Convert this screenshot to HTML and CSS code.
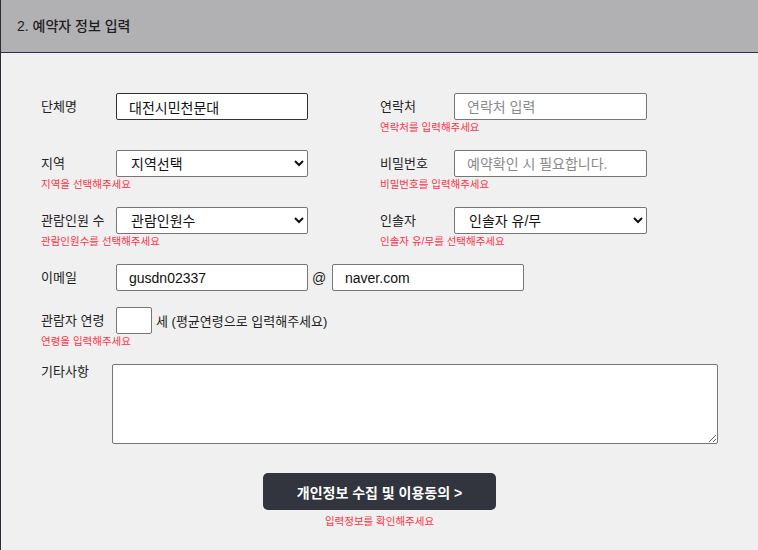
FILE: index.html
```html
<!DOCTYPE html>
<html lang="ko">
<head>
<meta charset="utf-8">
<title>예약자 정보 입력</title>
<link rel="stylesheet" href="styles.css">
</head>
<body>
<div class="page">
  <div class="header"><h2 class="title">2. 예약자 정보 입력</h2></div>
  <form class="form">
    <div class="row">
      <div class="group left">
        <div class="line"><label class="lbl">단체명</label><input class="inp dark" type="text" value="대전시민천문대"></div>
      </div>
      <div class="group right">
        <div class="line"><label class="lbl">연락처</label><input class="inp" type="text" placeholder="연락처 입력"></div>
        <p class="err">연락처를 입력해주세요</p>
      </div>
    </div>
    <div class="row">
      <div class="group left">
        <div class="line"><label class="lbl">지역</label><select class="sel"><option>지역선택</option></select></div>
        <p class="err">지역을 선택해주세요</p>
      </div>
      <div class="group right">
        <div class="line"><label class="lbl">비밀번호</label><input class="inp" type="text" placeholder="예약확인 시 필요합니다."></div>
        <p class="err">비밀번호를 입력해주세요</p>
      </div>
    </div>
    <div class="row">
      <div class="group left">
        <div class="line"><label class="lbl">관람인원 수</label><select class="sel"><option>관람인원수</option></select></div>
        <p class="err">관람인원수를 선택해주세요</p>
      </div>
      <div class="group right">
        <div class="line"><label class="lbl">인솔자</label><select class="sel"><option>인솔자 유/무</option></select></div>
        <p class="err">인솔자 유/무를 선택해주세요</p>
      </div>
    </div>
    <div class="row">
      <div class="group">
        <div class="line"><label class="lbl">이메일</label><input class="inp" type="text" value="gusdn02337"><span class="at">@</span><input class="inp" type="text" value="naver.com"></div>
      </div>
    </div>
    <div class="row">
      <div class="group">
        <div class="line"><label class="lbl">관람자 연령</label><input class="inp age" type="text"><span class="unit">세 (평균연령으로 입력해주세요)</span></div>
        <p class="err">연령을 입력해주세요</p>
      </div>
    </div>
    <div class="row memo">
      <label class="lbl memo-lbl">기타사항</label>
      <textarea class="area"></textarea>
    </div>
    <div class="actions">
      <button class="btn" type="button">개인정보 수집 및 이용동의 &gt;</button>
      <p class="err center">입력정보를 확인해주세요</p>
    </div>
  </form>
</div>
</body>
</html>
```
FILE: styles.css
```css
* { box-sizing: border-box; }
html, body { margin: 0; padding: 0; }
body {
  background: #f0f0f0;
  font-family: "Liberation Sans", "Noto Sans CJK KR", sans-serif;
  color: #222;
}
.page {
  border-left: 1px solid #2a2d38;
  min-height: 550px;
}
.header {
  height: 53px;
  background: #b1b1b4;
  border-bottom: 1px solid #2b3050;
  display: flex;
  align-items: center;
  padding-left: 16px;
}
.title {
  margin: 0;
  font-size: 14px;
  font-weight: 500;
  color: #1e1e1e;
  line-height: 16px;
  padding-bottom: 1px;
}
.form {
  padding: 40px 0 0 40px;
}
.row {
  display: flex;
  margin-bottom: 16px;
}
.group.left { width: 339px; }
.line {
  display: flex;
  align-items: center;
  height: 27px;
}
.lbl {
  width: 75px;
  flex: none;
  font-size: 13px;
  line-height: 16px;
  color: #222;
}
.right .lbl { width: 74px; }
.inp, .sel {
  width: 192px;
  height: 27px;
  border: 1px solid #767676;
  border-radius: 2px;
  background: #fff;
  font-family: "Liberation Sans", "Noto Sans CJK KR", sans-serif;
  font-size: 14px;
  color: #111;
  padding: 0 12px;
  margin: 0;
}
.right .inp, .right .sel { width: 193px; }
.inp::placeholder { color: #8a8a8a; }
.inp.dark { border-color: #333; }
.sel { padding: 0 8px 0 10px; }
.at {
  width: 24px;
  padding-left: 4px;
  font-size: 14px;
  color: #222;
}
.age { width: 36px; padding: 0 4px; }
.unit {
  margin-left: 4px;
  font-size: 13px;
  color: #222;
}
.err {
  margin: 0;
  font-size: 10.5px;
  line-height: 14px;
  color: #ff3348;
}
.memo { margin-bottom: 29px; }
.memo-lbl { width: 71px; }
.area {
  width: 606px;
  height: 80px;
  border: 1px solid #767676;
  border-radius: 2px;
  background: #fff;
  margin: 0;
  display: block;
}
.actions {
  display: flex;
  flex-direction: column;
  align-items: center;
  margin-left: -40px;
}
.btn {
  width: 233px;
  height: 37px;
  border: none;
  border-radius: 5px;
  background: #32343e;
  color: #fff;
  font-family: "Liberation Sans", "Noto Sans CJK KR", sans-serif;
  font-size: 14px;
  font-weight: 700;
  cursor: pointer;
}
.center { margin-top: 4px; text-align: center; }
```
